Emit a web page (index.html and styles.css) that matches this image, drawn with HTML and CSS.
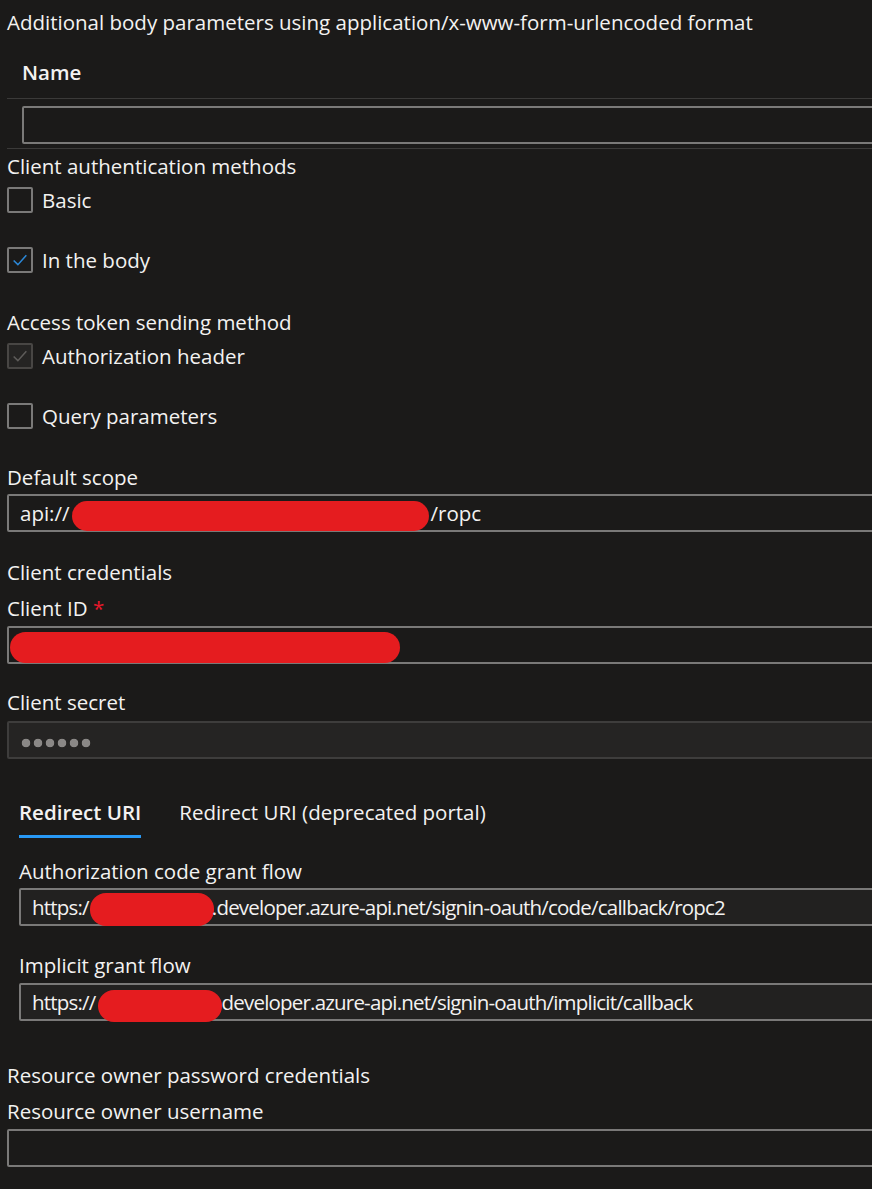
FILE: index.html
```html
<!DOCTYPE html>
<html lang="en">
<head>
    <meta charset="UTF-8">
    <meta name="viewport" content="width=device-width, initial-scale=1.0">
    <title>OAuth 2.0 settings</title>
    <link rel="stylesheet" href="styles.css">
</head>
<body>
    <div class="page">
        <!-- Доп. параметры тела запроса -->
        <p class="intro">Additional body parameters using application/x-www-form-urlencoded format</p>

        <div class="params-table">
            <div class="params-head">Name</div>
            <div class="params-row">
                <div class="field"></div>
            </div>
        </div>

        <!-- Методы аутентификации клиента -->
        <div class="group-title tight">Client authentication methods</div>
        <div class="check first">
            <span class="box"></span>
            <span>Basic</span>
        </div>
        <div class="check">
            <span class="box checked">
                <svg viewBox="0 0 26 26" width="26" height="26"><polyline points="5.5,13.5 10.5,18.5 20.5,7.5" /></svg>
            </span>
            <span>In the body</span>
        </div>

        <!-- Способ отправки токена -->
        <div class="group-title">Access token sending method</div>
        <div class="check first">
            <span class="box disabled">
                <svg viewBox="0 0 26 26" width="26" height="26"><polyline points="5.5,13.5 10.5,18.5 20.5,7.5" /></svg>
            </span>
            <span>Authorization header</span>
        </div>
        <div class="check">
            <span class="box"></span>
            <span>Query parameters</span>
        </div>

        <div class="label scope-label">Default scope</div>
        <div class="field">api://<span class="redact scope-redact"></span>/ropc</div>

        <!-- Учетные данные клиента -->
        <div class="group-title creds">Client credentials</div>
        <div class="label id-label">Client ID <span class="required">*</span></div>
        <div class="field"><span class="redact id-redact"></span></div>

        <div class="label secret-label">Client secret</div>
        <div class="field secret"><span class="dots"></span></div>

        <!-- Redirect URI -->
        <div class="redirect">
            <div class="tabs">
                <div class="tab active">Redirect URI</div>
                <div class="tab">Redirect URI (deprecated portal)</div>
            </div>

            <div class="label code-label">Authorization code grant flow</div>
            <div class="field url">https:/<span class="redact code-redact"></span>.developer.azure-api.net/signin-oauth/code/callback/ropc2</div>

            <div class="label implicit-label">Implicit grant flow</div>
            <div class="field url">https://<span class="redact implicit-redact"></span>developer.azure-api.net/signin-oauth/implicit/callback</div>
        </div>

        <!-- ROPC -->
        <div class="group-title ropc">Resource owner password credentials</div>
        <div class="label username-label">Resource owner username</div>
        <div class="field"></div>
    </div>
</body>
</html>
```

FILE: styles.css
```css
html, body {
    overflow: hidden;
}

body {
    margin: 0;
    height: 100vh;
    background-color: #1b1a19;
    color: #f3f2f1;
    font-family: "Open Sans", "Noto Sans", Arial, sans-serif;
    font-size: 20.5px;
    line-height: 28px;
}

.page {
    padding: 8px 0 0 7px;
    margin-right: -20px; /* поля уходят за правый край, как на скрине */
}

.intro {
    margin: 0;
}

/* Таблица параметров */
.params-table {
    margin-top: 22px;
}

.params-head {
    padding: 0 0 12px 15px;
    font-weight: 600;
    border-bottom: 1px solid #3b3a39;
}

.params-row {
    padding: 7px 0 4px 15px;
    border-bottom: 1px solid #3b3a39;
}

/* Поля ввода */
.field {
    height: 34px;
    line-height: 34px;
    padding: 0 11px;
    border: 2px solid #7a7978;
    border-radius: 2px;
    white-space: nowrap;
}

.field.secret {
    background-color: #252423;
    border-color: #3e3d3c;
}

.dots {
    display: inline-block;
    width: 72px;
    height: 10px;
    vertical-align: middle;
    background: radial-gradient(circle, #8a8886 4px, transparent 4.6px) 0 0 / 12px 10px repeat-x;
}

/* Закрашенные куски */
.redact {
    display: inline-block;
    vertical-align: middle;
    background-color: #e51c1f;
    border-radius: 16px;
}

.scope-redact {
    width: 357px;
    height: 30px;
    margin: 0 2px;
}

.id-redact {
    width: 390px;
    height: 31px;
    margin-left: -10px;
}

.code-redact {
    width: 124px;
    height: 33px;
    margin: 0 -2px 0 1px;
}

.implicit-redact {
    width: 124px;
    height: 32px;
    margin: 0 0 0 2px;
    vertical-align: -12px;
}

/* Заголовки групп */
.group-title {
    margin-top: 34px;
}

.group-title.tight {
    margin-top: 3px;
}

.group-title.creds {
    margin-top: 26px;
}

.group-title.ropc {
    margin-top: 40px;
}

/* Чекбоксы */
.check {
    display: flex;
    align-items: center;
    gap: 9px;
    margin-top: 32px;
}

.check.first {
    margin-top: 6px;
}

.box {
    width: 22px;
    height: 22px;
    border: 2px solid #7a7978;
    border-radius: 2px;
    display: flex;
    align-items: center;
    justify-content: center;
    overflow: hidden;
}

.box svg {
    fill: none;
    stroke-width: 1.8;
}

.box.checked svg {
    stroke: #2b88d8;
}

.box.disabled {
    border-color: #484644;
    background-color: #252423;
}

.box.disabled svg {
    stroke: #5e5c5a;
}

/* Подписи полей */
.label {
    margin-bottom: 4px;
}

.scope-label {
    margin-top: 33px;
    margin-bottom: 3px;
}

.id-label {
    margin-top: 8px;
}

.required {
    color: #e8182b;
}

.secret-label {
    margin-top: 24px;
    margin-bottom: 5px;
}

/* Вкладки Redirect URI */
.redirect {
    padding-left: 12px;
}

.tabs {
    display: flex;
    gap: 38px;
    margin-top: 39px;
}

.tab {
    padding-bottom: 9px;
}

.tab.active {
    font-weight: 600;
    border-bottom: 3px solid #2899f5;
}

.code-label {
    margin-top: 19px;
    margin-bottom: 3px;
}

.implicit-label {
    margin-top: 25px;
}

.field.url {
    background-color: #222120;
    letter-spacing: -0.8px;
}

.username-label {
    margin-top: 8px;
}
```
